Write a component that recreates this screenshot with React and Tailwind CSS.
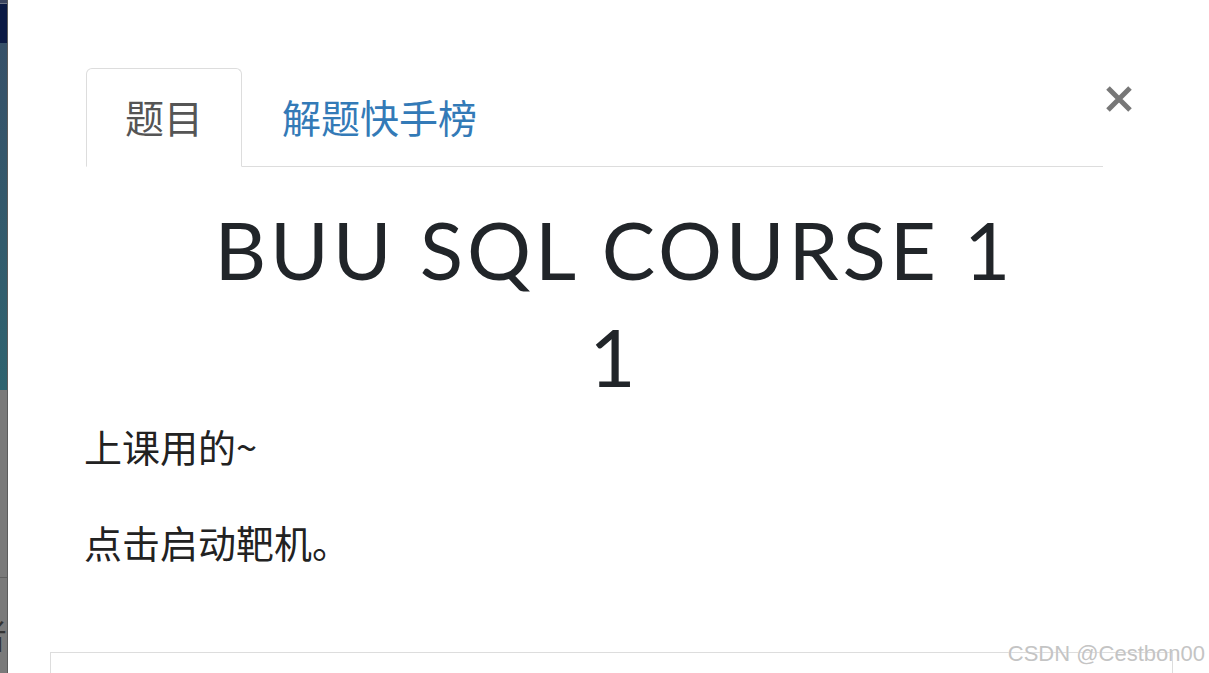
import React from "react";

function Sidebar() {
  return (
    <div className="flex w-[8px] shrink-0 flex-col border-r border-[#5c5c5c]">
      <div className="h-[3px] bg-[#3b4560]" />
      <div className="h-[1px] bg-[#707888]" />
      <div className="h-[39px] bg-[#0b1a44]" />
      <div className="h-[347px] bg-gradient-to-b from-[#365068] to-[#2e636f]" />
      <div className="h-[188px] border-b border-[#606060] bg-[#7a7a7a]" />
      <div className="flex h-[80px] justify-end overflow-hidden bg-[#7a7a7a] pt-[38px]">
        <span className="whitespace-nowrap text-[34px] leading-[38px] text-[#333] [font-family:'Noto_Sans_CJK_SC',sans-serif]">
          者
        </span>
      </div>
      <div className="flex-1 bg-[#7a7a7a]" />
    </div>
  );
}

function CloseIcon() {
  return (
    <svg width="28" height="28" viewBox="0 0 28 28" className="text-[#777]">
      <path d="M3 3 L25 25 M25 3 L3 25" stroke="currentColor" strokeWidth="5" strokeLinecap="butt" />
    </svg>
  );
}

export default function App() {
  return (
    <div className="flex h-[673px] w-full overflow-hidden bg-white [font-family:'Noto_Sans_CJK_SC',sans-serif]">
      <Sidebar />
      <div className="relative min-w-0 flex-1 bg-white">
        <button className="absolute left-[1097px] top-[85px]">
          <CloseIcon />
        </button>

        <div className="w-[1095px] pl-[78px] pt-[68px]">
          <ul className="flex border-b border-[#ddd]">
            <li className="-mb-px flex h-[99px] items-center rounded-t-[6px] border border-[#ddd] border-b-white bg-white px-[38px] pb-[2px] text-[39px] text-[#555]">
              题目
            </li>
            <li className="-mb-px flex h-[99px] items-center px-[40px] pb-[2px] text-[39px] text-[#337ab7]">
              解题快手榜
            </li>
          </ul>
        </div>

        <div className="w-full pl-[8px] pt-[29px] text-center text-[80px] leading-[107px] tracking-[0.048em] text-[#212529] [font-family:Lato,'Noto_Sans',sans-serif]">
          <div className="pl-[0.048em]">BUU SQL COURSE 1</div>
          <div className="pl-[0.048em]">1</div>
        </div>

        <div className="pl-[76px] pt-[10px] text-[38px] leading-[52px] text-[#222]">
          <p className="mb-[44px]">上课用的~</p>
          <p>点击启动靶机。</p>
        </div>

        <div className="ml-[42px] mt-[84px] h-[60px] w-[1123px] border border-[#ddd]" />

        <div className="absolute bottom-[7px] right-[4px] whitespace-nowrap text-[22px] leading-[24px] text-[#c4c4c4] [font-family:'Liberation_Sans',Arial,sans-serif] [text-shadow:0_0_1px_#fff]">
          CSDN @Cestbon00
        </div>
      </div>
    </div>
  );
}
